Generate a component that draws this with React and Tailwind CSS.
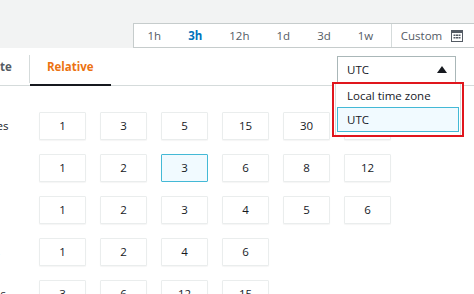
const ranges = ['1h', '3h', '12h', '1d', '3d', '1w'];

const rows = [
  { label: 'Minutes', values: ['1', '3', '5', '15', '30', '45'] },
  { label: 'Hours', values: ['1', '2', '3', '6', '8', '12'], selected: '3' },
  { label: 'Days', values: ['1', '2', '3', '4', '5', '6'] },
  { label: 'Weeks', values: ['1', '2', '4', '6'] },
  { label: 'Months', values: ['3', '6', '12', '15'] },
];

function CalendarIcon() {
  return (
    <svg width="12" height="12" viewBox="0 0 12 12" className="shrink-0">
      <rect x="0.5" y="0.5" width="11" height="11" fill="none" stroke="#545b64" />
      <rect x="1" y="1" width="10" height="2" fill="#545b64" />
      <rect x="2.5" y="4.5" width="2" height="1.5" fill="#545b64" />
      <rect x="5" y="4.5" width="2" height="1.5" fill="#545b64" />
      <rect x="7.5" y="4.5" width="2" height="1.5" fill="#545b64" />
      <rect x="2.5" y="7" width="2" height="1.5" fill="#545b64" />
      <rect x="5" y="7" width="2" height="1.5" fill="#545b64" />
      <rect x="7.5" y="7" width="2" height="1.5" fill="#545b64" />
    </svg>
  );
}

function RangeButton({ value, selected }) {
  return (
    <div
      className={
        selected
          ? 'w-[47px] h-[28px] flex items-center justify-center border border-[#44b9d6] bg-[#f1faff] text-[#16191f] rounded-[1px]'
          : 'w-[47px] h-[28px] flex items-center justify-center border border-[#eaeded] bg-white text-[#16191f] rounded-[1px] shadow-[0_1px_1px_rgba(0,0,0,0.04)]'
      }
    >
      {value}
    </div>
  );
}

export default function App() {
  return (
    <div className="w-[474px] h-[294px] overflow-hidden bg-white relative font-['Open_Sans',sans-serif] text-[11.5px] text-[#16191f]">
      {/* quick range bar */}
      <div className="h-[48px] bg-[#f2f3f3] flex items-end pl-[133px]">
        <div className="flex items-center h-[25px] bg-white border border-r-0 border-[#c6cccc] text-[#545b64]">
          {ranges.map((r) => (
            <div
              key={r}
              className={r === '3h' ? 'px-[13.5px] font-bold text-[#0073bb]' : 'px-[13.5px]'}
            >
              {r}
            </div>
          ))}
          <div className="ml-[4px] w-px h-full bg-[#d5dbdb]" />
          <div className="flex items-center gap-[9px] pl-[9px] pr-[20px]">
            <span>Custom</span>
            <CalendarIcon />
          </div>
        </div>
      </div>

      <div className="relative">
        {/* tabs + time zone select */}
        <div className="h-[38px] flex border-b border-[#d5dbdb]">
          <div className="flex -ml-[56px]">
            <div className="px-[17px] flex items-center font-bold text-[#545b64]">Absolute</div>
            <div className="w-px h-[28px] mt-[7px] bg-[#d5dbdb]" />
            <div className="px-[17px] flex items-center font-bold text-[#ec7211] border-b-2 border-[#16191f] -mb-px pt-[2px]">
              Relative
            </div>
          </div>
          <div className="ml-auto mr-[18px] mt-[8px] w-[119px] h-[27px] border border-[#aab7b8] bg-white flex items-center justify-between pl-[9px] pr-[8px]">
            <span>UTC</span>
            <svg width="10" height="7" viewBox="0 0 10 7">
              <polygon points="5,0 10,7 0,7" fill="#16191f" />
            </svg>
          </div>
        </div>

        {/* relative ranges */}
        <div className="-ml-[35px] pt-[26px] flex flex-col gap-[14px]">
          {rows.map((row) => (
            <div key={row.label} className="flex items-center">
              <div className="w-[74px] shrink-0">{row.label}</div>
              <div className="flex gap-[14px]">
                {row.values.map((v) => (
                  <RangeButton key={v} value={v} selected={row.selected === v} />
                ))}
              </div>
            </div>
          ))}
        </div>

        {/* time zone options, highlighted */}
        <div className="absolute left-[332px] top-[34px] w-[132px] h-[55px] border-2 border-[#e0161d] bg-white">
          <div className="mx-px h-full border-x border-[#d5dbdb] flex flex-col">
            <div className="h-[23px] flex items-center pl-[11px]">Local time zone</div>
            <div className="h-[25px] mx-px flex items-center pl-[9px] border border-[#44b9d6] bg-[#f1faff]">UTC</div>
          </div>
        </div>
      </div>
    </div>
  );
}
